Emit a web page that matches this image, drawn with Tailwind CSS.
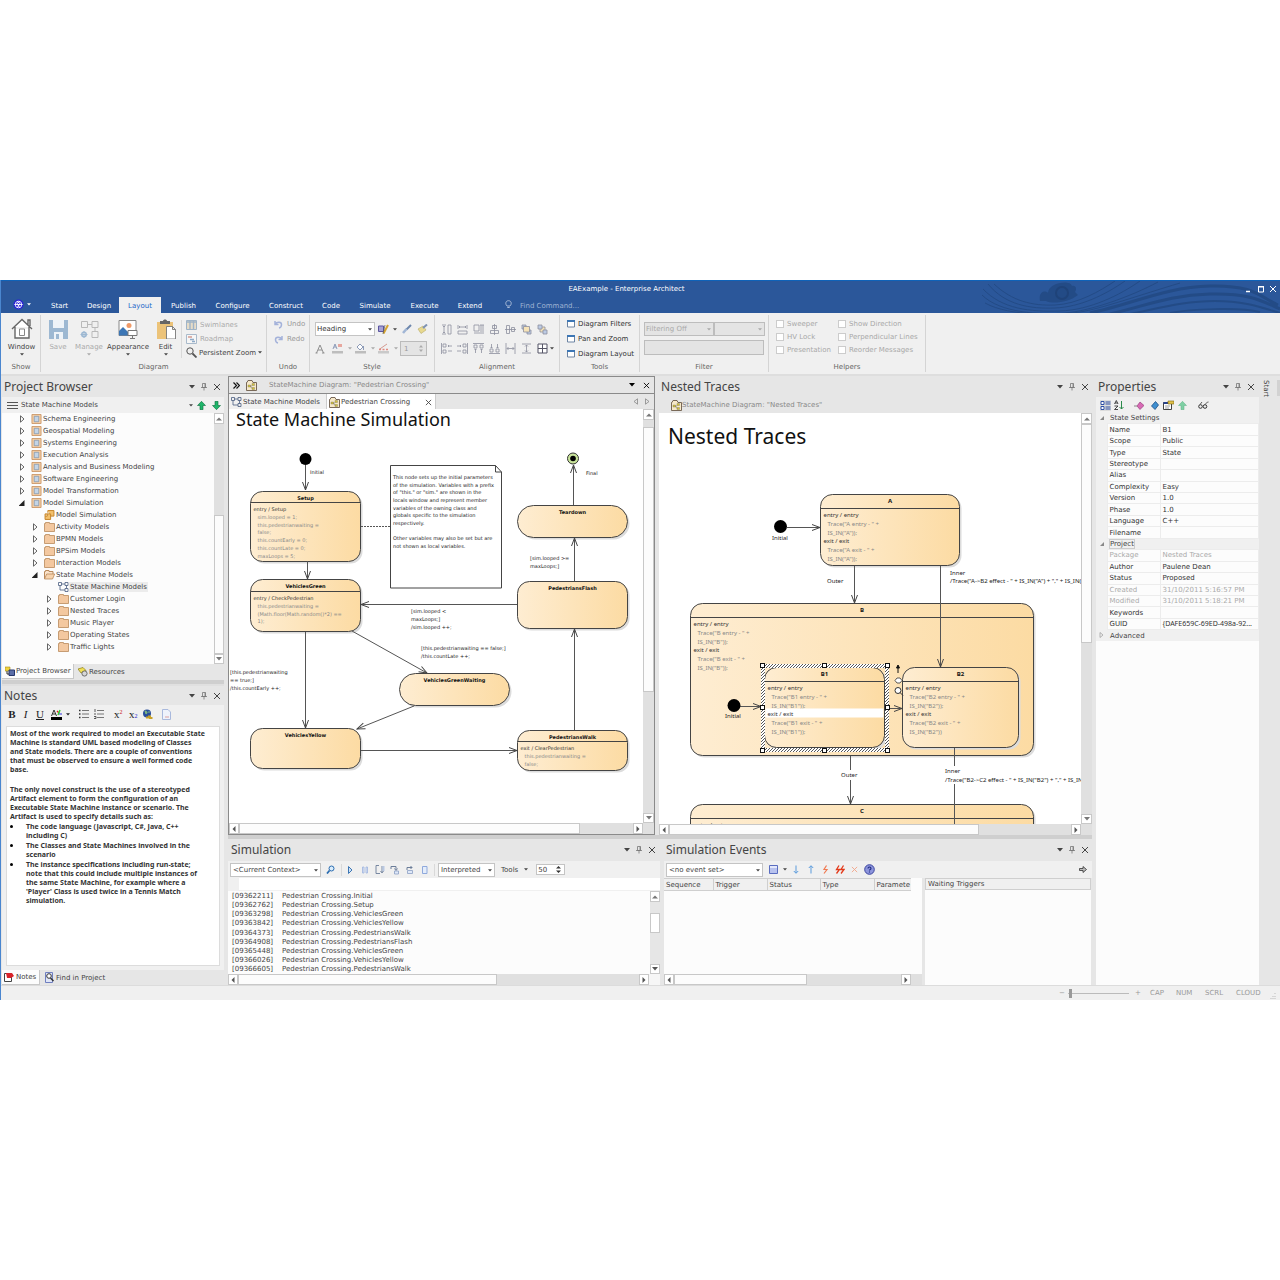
<!DOCTYPE html>
<html lang="en">
  <head>
    <meta charset="UTF-8" />
    <meta name="viewport" content="width=device-width, initial-scale=1.0" />
    <title>EAExample - Enterprise Architect</title>
    <script src="https://cdn.jsdelivr.net/npm/@tailwindcss/browser@4"></script>
  </head>
  <body class="bg-white min-h-screen flex items-center font-['DejaVu_Sans',sans-serif] text-[7px] leading-[10px] text-[#444]">
    <!-- Shared icons -->
    <svg class="hidden">
      <symbol id="down" viewBox="0 0 6 4"><path d="M0 0h6L3 3.5z" fill="currentColor" /></symbol>
      <symbol id="pin" viewBox="0 0 8 8"><path d="M2.5 .5h3v4h-3zM1 4.5h6M4 4.5v3M5 .5v4" fill="none" stroke="#777" stroke-width=".8" /></symbol>
      <symbol id="close" viewBox="0 0 8 8"><path d="M1 1l6 6M7 1L1 7" fill="none" stroke="currentColor" /></symbol>
      <symbol id="model" viewBox="0 0 11 11"><path d="M.5 .5h10v10H.5z" fill="#f6cfa6" stroke="#c99667" /><path d="M3 2.5h5v6H3z" fill="#c3d4e6" stroke="#7f93ab" stroke-width=".8" /></symbol>
      <symbol id="folder" viewBox="0 0 11 10"><path d="M.5 9.5V1.5h1v-1h4v1h5v8z" fill="#f3c8a0" stroke="#b98a5c" stroke-width=".8" /></symbol>
      <symbol id="open" viewBox="0 0 11 10"><path d="M.5 9V1.5h1v-1h3.500v1h4v2.500" fill="#fbe3cb" stroke="#b98a5c" /><path d="M.5 9l2.200-5h8L8.500 9z" fill="#f7d3ad" stroke="#b98a5c" stroke-width=".8" /></symbol>
      <symbol id="sim" viewBox="0 0 9 9"><path d="M3 .5h5.500v5H5M3 .5v2M.5 3.500h5v5h-5zM.5 5.500h2v-2" fill="#f2c06d" stroke="#c8872d" stroke-width=".9" /></symbol>
      <symbol id="diagram" viewBox="0 0 11 10"><path d="M.5 .5h3v3h-3zM7 .5h3v3H7zM7 6.500h3v3H7zM3.500 2H7M2 3.500V8h5M8.500 3.500v3" fill="none" stroke="#4a5d80" stroke-width=".8" /></symbol>
      <symbol id="machine" viewBox="0 0 11 11"><path d="M1 2.500l1-2h4l1 2h3.500v8H.5v-8z" fill="#f7e9c9" stroke="#6b5a4a" stroke-width=".9" /><path d="M2 5h2.500v2H2zM6 3.500h2.500v2H6zM6 7.500h2.500v2H6z" fill="#d8c32e" stroke="#777" stroke-width=".4" /><path d="M4.500 6H6M4.500 6.500L6 8.500" stroke="#555" stroke-width=".5" /></symbol>
      <symbol id="win" viewBox="0 0 8 8"><path d="M.5 .5h7v6.500h-7z" fill="#fff" stroke="#6c84a3" /><path d="M0 0h8v2H0z" fill="#3c76b5" /></symbol>
      <symbol id="tri-up" viewBox="0 0 6 4"><path d="M0 3.500h6L3 .5z" fill="#777" /></symbol>
      <symbol id="tri-left" viewBox="0 0 4 6"><path d="M3.500 0v6L.5 3z" fill="#555" /></symbol>
      <symbol id="tri-right" viewBox="0 0 4 6"><path d="M.5 0v6L3.500 3z" fill="#555" /></symbol>
      <symbol id="arrow-green-up" viewBox="0 0 9 9"><path d="M4.500 .3L8.500 4.500H6V8.700H3V4.500H.5z" fill="#1fb56a" stroke="#0a6b3b" stroke-width=".6" /></symbol>
    </svg>

    <div class="w-full bg-[#e6e6e6] border-l border-[#4a86cf]">
      <!-- Title bar and ribbon tabs -->
      <header class="relative bg-[#2b579a] border-t border-[#0f62b8] text-white overflow-hidden">
        <svg class="absolute right-0 top-0 w-[300px] h-8" viewBox="0 0 300 32" fill="none" stroke="#234b86">
          <path d="M8 3C25 24 50 28 75 27S125 14 145 0M14 3C32 20 52 25 75 24S120 10 135 0M3 8C22 28 50 31 80 30S140 14 160 0M2 14C20 32 60 34 85 32S150 16 178 1M5 22C30 36 80 34 100 31S160 14 200 2" />
          <path d="M110 32C150 24 185 6 230 5S280 16 298 24M130 33C165 25 190 14 230 13S282 20 300 28" stroke-width="3" />
          <path d="M150 33C180 27 205 20 235 20S280 26 300 32M190 32C210 28 260 26 280 31" stroke-width="2" />
          <path d="M60 20C58 10 66 9 68 12C68 2 90 -2 92 5C96 4 97 8 95 11L98 14C88 22 72 23 66 20z" fill="#234b86" stroke="none" />
          <circle cx="82" cy="12" r="6" stroke="#1f4379" stroke-width="2" />
        </svg>
        <div class="relative flex items-center h-4 pr-7">
          <span class="flex-1 text-center">EAExample - Enterprise Architect</span>
          <button class="absolute right-[28px] top-1 w-2 h-2" aria-label="Minimize"><svg class="w-2 h-2" viewBox="0 0 8 8"><path d="M2 6.500h4" stroke="#fff" stroke-width="1.500" /></svg></button>
          <button class="absolute right-[15px] top-1 w-2 h-2" aria-label="Maximize"><svg class="w-2 h-2" viewBox="0 0 8 8"><path d="M1.500 2h5v5h-5z" fill="none" stroke="#fff" /><path d="M1 1.500h6" stroke="#fff" /></svg></button>
          <button class="absolute right-[3px] top-1 w-2 h-2" aria-label="Close"><svg class="w-2 h-2"><use href="#close" /></svg></button>
        </div>
        <nav class="relative flex items-end h-4">
          <button class="flex items-center gap-[3px] w-[39px] h-3 pl-3 mb-[3px]" aria-label="Application menu">
            <svg class="w-[11px] h-[11px]" viewBox="0 0 11 11"><circle cx="5.500" cy="5.500" r="5" fill="#2a22d8" /><path d="M4 2l3 2.500L4 9M7 2L4 4.500L7 9M1.500 5.500h8" fill="none" stroke="#fff" stroke-width=".9" /><circle cx="5.500" cy="5.500" r="3.300" fill="none" stroke="#fff" stroke-width=".8" /></svg>
            <svg class="w-1 h-[3px]"><use href="#down" /></svg>
          </button>
          <a href="#" class="w-[39px] h-4 leading-4 pt-px text-center">Start</a>
          <a href="#" class="w-[40px] h-4 leading-4 pt-px text-center">Design</a>
          <a href="#" class="w-[42px] h-4 leading-4 pt-px text-center bg-[#f0f0f0] text-[#1d66c9]">Layout</a>
          <a href="#" class="w-[45px] h-4 leading-4 pt-px text-center">Publish</a>
          <a href="#" class="w-[53px] h-4 leading-4 pt-px text-center">Configure</a>
          <a href="#" class="w-[54px] h-4 leading-4 pt-px text-center">Construct</a>
          <a href="#" class="w-[36px] h-4 leading-4 pt-px text-center">Code</a>
          <a href="#" class="w-[52px] h-4 leading-4 pt-px text-center">Simulate</a>
          <a href="#" class="w-[47px] h-4 leading-4 pt-px text-center">Execute</a>
          <a href="#" class="w-[44px] h-4 leading-4 pt-px text-center">Extend</a>
          <svg class="ml-[13px] mb-1 w-[7px] h-[9px]" viewBox="0 0 7 9"><path d="M2 6C0 4 .5 .7 3.500 .7S7 4 5 6zM2.300 7.500h2.400" fill="none" stroke="#a9bbd8" /></svg>
          <input class="ml-2 h-4 pt-px w-[90px] placeholder:text-[#9fb3d3]" placeholder="Find Command..." aria-label="Find Command" />
        </nav>
      </header>

      <!-- Ribbon -->
      <section class="flex h-[63px] bg-[#f0f0f0] border-b-2 border-[#dedede] pt-[2px] pb-[2px] pl-px">
        <div class="w-[39px] flex flex-col justify-between border-r border-[#d4d4d4]">
          <button class="flex flex-col items-center pt-[3px] pl-px">
            <svg class="w-[22px] h-[21px]" viewBox="0 0 22 21"><path d="M1 11L11 1.500L21 11M17 7V2h2v6M4 9v11h14V9" fill="#fff" stroke="#666" stroke-width="1.400" /><path d="M8.500 11h5v6.500h-5z" fill="none" stroke="#888" /></svg>
            <span class="mt-[3px]">Window</span><svg class="mt-px w-1 h-[3px]"><use href="#down" /></svg>
          </button>
          <span class="text-center text-[#666]">Show</span>
        </div>
        <div class="w-[226px] flex flex-col justify-between border-r border-[#d4d4d4]">
          <div class="flex">
            <button class="w-[34px] flex flex-col items-center pt-[5px] text-[#aaa]">
              <svg class="w-[19px] h-[19px]" viewBox="0 0 19 19"><path d="M0 0h19v19H0z" fill="#9db8d2" /><path d="M4 0h11v8H4zM5 12h9v7H5z" fill="#eef3f8" /><path d="M7 14h3v5H7z" fill="#9db8d2" /></svg>
              <span class="mt-[3px]">Save</span>
            </button>
            <button class="w-[28px] flex flex-col items-center pt-[5px] text-[#aaa]">
              <svg class="w-[19px] h-[19px]" viewBox="0 0 19 19"><path d="M1.500 1.500h6v6h-6zM12 1.500h6v6h-6zM12 11.500h6v6h-6zM7.500 4.500H12M15 7.500v4" fill="none" stroke="#b9b9b9" /><circle cx="4" cy="14.500" r="2.200" fill="none" stroke="#9db8d2" stroke-width="1.600" /><path d="M4 11v7M.5 14.500h7" stroke="#9db8d2" /></svg>
              <span class="mt-[3px]">Manage</span><svg class="mt-px w-1 h-[3px]"><use href="#down" /></svg>
            </button>
            <button class="w-[50px] flex flex-col items-center pt-[5px]">
              <svg class="w-[20px] h-[19px]" viewBox="0 0 20 19"><path d="M1 .5h17v15H1z" fill="#fff" stroke="#888" /><circle cx="11" cy="5.500" r="2.500" fill="#f09a68" /><path d="M1 15.500V11l4-4l5 5v3.500z" fill="#3c76b5" /><path d="M10 10.500h9v5h-9zM14.500 15.500v3M12 18.500h5" fill="#fff" stroke="#777" /></svg>
              <span class="mt-[3px]">Appearance</span><svg class="mt-px w-1 h-[3px]"><use href="#down" /></svg>
            </button>
            <button class="w-[28px] flex flex-col items-center pt-[4px] pr-[3px]">
              <svg class="w-[20px] h-[20px]" viewBox="0 0 20 20"><path d="M1 3h16v17H1z" fill="#ecc379" /><path d="M4 5V2h3c0-2 4-2 4 0h3v3z" fill="#666" /><path d="M10.500 7.500h6l3 3v9.500h-9zM16.500 7.500v3h3" fill="#fff" stroke="#777" stroke-width=".9" /></svg>
              <span class="mt-[3px]">Edit</span><svg class="mt-px w-1 h-[3px]"><use href="#down" /></svg>
            </button>
            <div class="mt-[5px] h-[38px] border-l border-[#d9d9d9] pl-1 flex flex-col justify-between">
              <button class="flex items-center gap-[3px] text-[#aaa]"><svg class="w-[11px] h-[10px]" viewBox="0 0 11 10"><path d="M.5 .5h10v9H.5z" fill="#e6dcc8" stroke="#9fb4c8" /><path d="M4 0v10M7.500 0v10M0 2h11" stroke="#9fb4c8" stroke-width="1.400" /></svg>Swimlanes</button>
              <button class="flex items-center gap-[3px] text-[#aaa]"><svg class="w-[11px] h-[10px]" viewBox="0 0 11 10"><path d="M.5 .5h10v9H.5z" fill="#f6f6f6" stroke="#a9bacb" /><path d="M2 3h4" stroke="#d49a90" stroke-width="1.500" /><path d="M4 5.500h4M6 7.500h3" stroke="#8eaac8" stroke-width="1.300" /></svg>Roadmap</button>
              <button class="flex items-center gap-[2px]"><svg class="w-[11px] h-[11px]" viewBox="0 0 11 11"><circle cx="4" cy="4" r="3.200" fill="none" stroke="#555" /><path d="M6.500 6.500l4 4" stroke="#555" stroke-width="1.800" /></svg>Persistent Zoom<svg class="w-1 h-[3px]"><use href="#down" /></svg></button>
            </div>
          </div>
          <span class="text-center text-[#666]">Diagram</span>
        </div>
        <div class="w-[43px] flex flex-col justify-between border-r border-[#d4d4d4] text-[#999]">
          <div class="flex flex-col gap-[5px] pt-1 pl-[7px]">
            <button class="flex items-center gap-1"><svg class="w-[9px] h-[9px]" viewBox="0 0 9 9"><path d="M1 1v3.500h3.500M1 4C3 1.500 7.500 1.500 7.500 4.500S5 8 5 8" fill="none" stroke="#a4b2da" stroke-width="1.500" /></svg>Undo</button>
            <button class="flex items-center gap-1"><svg class="w-[9px] h-[9px]" viewBox="0 0 9 9"><path d="M8 1v3.500H4.500M8 4C6 1.500 1.500 1.500 1.500 4.500S4 8 4 8" fill="none" stroke="#a4b2da" stroke-width="1.500" /></svg>Redo</button>
          </div>
          <span class="text-center text-[#666]">Undo</span>
        </div>
        <div class="w-[125px] flex flex-col justify-between border-r border-[#d4d4d4]">
          <div class="pt-[7px] pl-[5px]">
            <div class="flex items-center">
              <span class="relative"><select aria-label="Style" class="appearance-none block w-[60px] h-[14px] bg-white border border-[#c4c4c4] pl-px text-[#333]"><option>Heading</option></select><svg class="absolute right-[3px] top-[6px] w-1 h-[3px] pointer-events-none"><use href="#down" /></svg></span>
              <svg class="ml-[3px] w-[11px] h-[11px]" viewBox="0 0 11 11"><path d="M.5 2h5v5.500h-5z" fill="#a6a2d4" stroke="#5a55a0" /><path d="M10 1L5.500 9.500" stroke="#d6a531" stroke-width="2" /><path d="M7 1L5 10" stroke="#555" stroke-width=".7" /></svg>
              <svg class="ml-1 w-1 h-[3px]"><use href="#down" /></svg>
              <svg class="ml-[5px] w-[10px] h-[10px]" viewBox="0 0 10 10"><path d="M9 1L4.500 5.500" stroke="#6d87ad" stroke-width="2" /><path d="M4.500 5L1 9" stroke="#a2b7d6" stroke-width="2.500" /></svg>
              <svg class="ml-[5px] w-[11px] h-[10px]" viewBox="0 0 11 10"><path d="M1 5l5-3l3 4l-5 3.500z" fill="#e8d98f" stroke="#b9ab6a" stroke-width=".6" /><path d="M6 4L10 .5" stroke="#7f93b4" stroke-width="2" /></svg>
            </div>
            <div class="flex items-center mt-[5px]">
              <svg class="w-[10px] h-[10px]" viewBox="0 0 10 10"><path d="M1.500 9L5 1l3.500 8M3 6h4M.5 9h2M7 9h2.500" fill="none" stroke="#8f8f8f" /></svg>
              <svg class="ml-[7px] w-[11px] h-[11px]" viewBox="0 0 11 11"><path d="M1 6L3 1l2 5M2 4h2" fill="none" stroke="#8d9bb8" /><path d="M6 1h4v3H6z" fill="#e7a79e" /><path d="M0 8h11v2.500H0z" fill="#bdbdbd" /></svg>
              <svg class="ml-[5px] w-1 h-[3px] text-[#aaa]"><use href="#down" /></svg>
              <svg class="ml-[3px] w-[11px] h-[11px]" viewBox="0 0 11 11"><path d="M2 4l3-3l3 3l-3 3zM8.500 3v4" fill="#fff" stroke="#8d9bb8" /><path d="M0 8h11v2.500H0z" fill="#bdbdbd" /></svg>
              <svg class="ml-[5px] w-1 h-[3px] text-[#aaa]"><use href="#down" /></svg>
              <svg class="ml-[3px] w-[11px] h-[11px]" viewBox="0 0 11 11"><path d="M1 6.500L9 1" stroke="#d49a90" /><path d="M1 6.500h2M4.500 6.500h2M8 6.500h2" stroke="#e08a80" stroke-width="1.500" /><path d="M0 8h11v2.500H0z" fill="#c9c9c9" /></svg>
              <svg class="ml-[5px] w-1 h-[3px] text-[#aaa]"><use href="#down" /></svg>
              <span class="relative ml-[2px]"><input aria-label="Line width" value="1" class="block w-[27px] h-[15px] bg-[#e4e4e4] border border-[#bbb] pl-[3px] text-[#999]" /><svg class="absolute right-1 top-1 w-1 h-[7px]" viewBox="0 0 4 7"><path d="M0 2.500h4L2 0zM0 4.500h4L2 7z" fill="#aaa" /></svg></span>
            </div>
          </div>
          <span class="text-center text-[#666]">Style</span>
        </div>
        <div class="w-[125px] flex flex-col justify-between border-r border-[#d4d4d4]">
          <div class="flex flex-col gap-[8px] pt-[9px] pl-[6px]">
            <div class="flex gap-[5px]" id="align-top"></div>
            <div class="flex gap-[5px] items-center" id="align-bottom"></div>
          </div>
          <span class="text-center text-[#666]">Alignment</span>
        </div>
        <div class="w-[80px] flex flex-col justify-between border-r border-[#d4d4d4]">
          <div class="flex flex-col gap-[5px] pt-1 pl-[7px] text-[#333]">
            <button class="flex items-center gap-[3px]"><svg class="w-2 h-2"><use href="#win" /></svg>Diagram Filters</button>
            <button class="flex items-center gap-[3px]"><svg class="w-2 h-2"><use href="#win" /></svg>Pan and Zoom</button>
            <button class="flex items-center gap-[3px]"><svg class="w-2 h-2"><use href="#win" /></svg>Diagram Layout</button>
          </div>
          <span class="text-center text-[#666]">Tools</span>
        </div>
        <div class="w-[129px] flex flex-col justify-between border-r border-[#d4d4d4]">
          <div class="pt-[7px] pl-1">
            <div class="flex">
              <span class="relative"><select disabled aria-label="Filter mode" class="appearance-none block w-[70px] h-[14px] bg-[#e4e4e4] border border-[#bdbdbd] pl-px text-[#aaa]"><option>Filtering Off</option></select><svg class="absolute right-[3px] top-[6px] w-1 h-[3px] text-[#aaa]"><use href="#down" /></svg></span>
              <span class="relative"><select disabled aria-label="Filter value" class="appearance-none block w-[51px] h-[14px] bg-[#e4e4e4] border border-[#bdbdbd]"><option></option></select><svg class="absolute right-[3px] top-[6px] w-1 h-[3px] text-[#aaa]"><use href="#down" /></svg></span>
            </div>
            <input disabled aria-label="Filter text" class="mt-1 block w-[120px] h-[15px] bg-[#e4e4e4] border border-[#bdbdbd]" />
          </div>
          <span class="text-center text-[#666]">Filter</span>
        </div>
        <div class="w-[157px] flex flex-col justify-between border-r border-[#d4d4d4] text-[#a8a8a8]">
          <div class="grid grid-cols-[62px_auto] gap-y-[3px] pt-1 pl-[7px]" id="helpers"></div>
          <span class="text-center text-[#666]">Helpers</span>
        </div>
      </section>

      <main class="flex">
        <!-- Left column -->
        <aside class="w-[227px] shrink-0 flex flex-col pl-px pr-[4px]">
          <div class="flex items-center h-[21px] pl-[2px] pr-[3px]">
            <h2 class="flex-1 font-['Noto_Sans',sans-serif] text-[12px] leading-4">Project Browser</h2>
            <span class="flex items-center gap-[5px]"><svg class="w-[6px] h-1"><use href="#down" /></svg><svg class="w-2 h-2"><use href="#pin" /></svg><svg class="w-2 h-2"><use href="#close" /></svg></span>
          </div>
          <div class="flex items-center h-4 bg-[#f0f0f0] pl-[5px] pr-[3px]">
            <svg class="w-[11px] h-[9px]" viewBox="0 0 11 9"><path d="M0 1.500h11M0 4.500h11M0 7.500h11" stroke="#555" /></svg>
            <span class="flex-1 pl-[3px]">State Machine Models</span>
            <svg class="w-1 h-[3px] mr-1"><use href="#down" /></svg>
            <svg class="w-[9px] h-[9px] mr-[6px]"><use href="#arrow-green-up" /></svg>
            <svg class="w-[9px] h-[9px] rotate-180"><use href="#arrow-green-up" /></svg>
          </div>
          <div class="flex h-[251px] bg-[#fcfcfc]">
            <ul class="flex-1" id="tree"></ul>
            <div class="w-[10px] flex flex-col bg-[#e0e0e0]">
              <button class="h-[11px] grid place-items-center bg-white border border-[#c8c8c8]" aria-label="Scroll up"><svg class="w-[6px] h-1"><use href="#tri-up" /></svg></button>
              <div class="flex-1"></div>
              <div class="h-[139px] bg-[#fcfcfc] border border-[#c8c8c8]"></div>
              <button class="h-[10px] grid place-items-center bg-white border border-[#c8c8c8] text-[#777]" aria-label="Scroll down"><svg class="w-[6px] h-1"><use href="#down" /></svg></button>
            </div>
          </div>
          <div class="flex h-[15px]">
            <button class="flex items-center gap-px w-[72px] pl-[3px] bg-[#fcfcfc] border-r border-b border-[#c8c8c8]"><svg class="w-[10px] h-[10px]" viewBox="0 0 10 10"><path d="M0 1h5v4H0z" fill="#f0d33e" stroke="#a58c1a" stroke-width=".6" /><path d="M4 4h5.500v5.500H4z" fill="#5a6ea8" stroke="#26366b" /><path d="M2 5v3h2" stroke="#333" fill="none" /></svg>Project Browser</button>
            <button class="flex items-center gap-px pl-1"><svg class="w-[10px] h-[10px]" viewBox="0 0 10 10"><path d="M0 2l5-1.500l3 3L3 6z" fill="#f1e056" stroke="#8a7a16" stroke-width=".7" /><circle cx="6.500" cy="6.500" r="2.600" fill="#d7d7d7" stroke="#555" stroke-width=".8" /></svg>Resources</button>
          </div>
          <div class="h-[6px] mt-px bg-[#cfcfcf] border-b-2 border-[#e0e0e0]"></div>

          <div class="flex items-center h-[19px] pl-[2px] pr-[3px]">
            <h2 class="flex-1 font-['Noto_Sans',sans-serif] text-[12px] leading-4">Notes</h2>
            <span class="flex items-center gap-[5px]"><svg class="w-[6px] h-1"><use href="#down" /></svg><svg class="w-2 h-2"><use href="#pin" /></svg><svg class="w-2 h-2"><use href="#close" /></svg></span>
          </div>
          <div class="bg-[#f0f0f0] px-1 pb-1">
            <div class="flex items-center h-[18px] text-[11px] font-['Liberation_Serif',serif] text-[#222]">
              <button class="w-[12px] text-center font-bold">B</button>
              <button class="w-[15px] text-center italic">I</button>
              <button class="w-[14px] text-center underline">U</button>
              <svg class="ml-1 w-[11px] h-[11px]" viewBox="0 0 11 11"><path d="M.5 7L3 1l2.500 6M1.500 5h3" fill="none" stroke="#333" /><path d="M6 2l2 2" stroke="#d22" stroke-width="1.500" /><path d="M9 1L7 6" stroke="#3c3" stroke-width="1.500" /><path d="M8 5h3" stroke="#33d" /><path d="M0 8h11v3H0z" fill="#000" /></svg>
              <svg class="ml-1 w-1 h-[3px]"><use href="#down" /></svg>
              <svg class="ml-[9px] w-[10px] h-[10px]" viewBox="0 0 10 10"><path d="M3 1.500h7M3 5h7M3 8.500h7" stroke="#777" /><path d="M0 1.500h1.500M0 5h1.500M0 8.500h1.500" stroke="#333" stroke-width="1.500" /></svg>
              <svg class="ml-[5px] w-[10px] h-[10px]" viewBox="0 0 10 10"><path d="M3 1.500h7M3 5h7M3 8.500h7" stroke="#777" /><path d="M1 0v3M0 5h2M0 7.500h2v2H0" stroke="#333" stroke-width=".8" fill="none" /></svg>
              <button class="ml-[10px] w-[15px] flex items-start">x<span class="text-[6px] leading-[6px] text-[#c22]">2</span></button>
              <button class="w-[13px] flex items-end">x<span class="text-[6px] leading-[6px] text-[#22c]">2</span></button>
              <svg class="w-[11px] h-[11px]" viewBox="0 0 11 11"><circle cx="5" cy="4.500" r="4" fill="#2a4f9b" /><path d="M3 2c2 0 3 2 1 3zM6 3h2" fill="#7fb87f" stroke="#7fb87f" /><path d="M4 8.500h3M7 9h3.500M6 7.500h3" stroke="#c9a227" stroke-width="1.800" /></svg>
              <svg class="ml-[9px] w-[9px] h-[11px]" viewBox="0 0 9 11"><path d="M.5 .5h5.500l2.500 2.500v7.500h-8z" fill="#eef2fb" stroke="#a9b9dd" /><path d="M3 8h4" stroke="#dba0a0" /></svg>
            </div>
            <div class="mt-[3px] h-[240px] bg-white border border-[#dcdcdc] px-[3px] pt-[2px] font-['Noto_Sans',sans-serif] font-bold leading-[9px] text-[#333]">
              <p class="whitespace-nowrap">Most of the work required to model an Executable State<br />Machine is standard UML based modeling of Classes<br />and State models. There are a couple of conventions<br />that must be observed to ensure a well formed code<br />base.</p>
              <p class="mt-[11px] whitespace-nowrap">The only novel construct is the use of a stereotyped<br />Artifact element to form the configuration of an<br />Executable State Machine instance or scenario. The<br />Artifact is used to specify details such as:</p>
              <ul class="mt-px flex flex-col gap-px pl-4 whitespace-nowrap">
                <li class="relative before:absolute before:-left-4 before:top-[3px] before:w-[3px] before:h-[3px] before:rounded-full before:bg-black">The code language (Javascript, C#, Java, C++<br />including C)</li>
                <li class="relative before:absolute before:-left-4 before:top-[3px] before:w-[3px] before:h-[3px] before:rounded-full before:bg-black">The Classes and State Machines involved in the<br />scenario</li>
                <li class="relative before:absolute before:-left-4 before:top-[3px] before:w-[3px] before:h-[3px] before:rounded-full before:bg-black">The instance specifications including run-state;<br />note that this could include multiple instances of<br />the same State Machine, for example where a<br />'Player' Class is used twice in a Tennis Match<br />simulation.</li>
              </ul>
            </div>
          </div>
          <div class="flex h-[15px]">
            <button class="flex items-center gap-[2px] w-[38px] pl-[2px] bg-[#fcfcfc] border-r border-b border-[#c8c8c8]"><svg class="w-[10px] h-[10px]" viewBox="0 0 10 10"><path d="M.5 1.500h7v8h-7z" fill="#fff" stroke="#444" /><path d="M2 1h6l2 3l-3 2H3z" fill="#d8242a" /></svg>Notes</button>
            <button class="flex items-center gap-[2px] pl-[5px]"><svg class="w-[9px] h-[11px]" viewBox="0 0 9 11"><path d="M.5 .5h7v10h-7z" fill="#dfe5f7" stroke="#6f7fc0" /><circle cx="4" cy="4" r="2.300" fill="#fff" stroke="#333" /><path d="M5.500 6l3 3" stroke="#333" stroke-width="1.500" /></svg>Find in Project</button>
          </div>
        </aside>

        <!-- Centre column -->
        <div class="flex-1 min-w-0 flex flex-col">
          <div class="flex">
            <section class="flex-[428] min-w-0 border border-[#8a8a8a]">
              <div class="flex items-center h-[17px] border-b border-[#8a8a8a] pl-1 pr-1">
                <svg class="w-[7px] h-[7px]" viewBox="0 0 7 7"><path d="M.5 .5l3 3l-3 3M3.500 .5l3 3l-3 3" fill="none" stroke="#111" stroke-width="1.200" /></svg>
                <svg class="ml-[6px] w-[11px] h-[11px]"><use href="#machine" /></svg>
                <span class="flex-1 pl-3 text-[#888]">StateMachine Diagram: "Pedestrian Crossing"</span>
                <svg class="w-[6px] h-1 mr-2 text-black"><use href="#down" /></svg>
                <svg class="w-[7px] h-[7px] text-black"><use href="#close" /></svg>
              </div>
              <div class="flex items-stretch h-[15px]">
                <button class="flex items-center gap-px w-[97px] pl-[2px] bg-[#f0f0f0]"><svg class="w-[11px] h-[10px]"><use href="#diagram" /></svg>State Machine Models</button>
                <button class="flex items-center gap-px w-[110px] pl-[2px] bg-white border-l border-r border-[#ccc] pt-px"><svg class="w-[11px] h-[11px]"><use href="#machine" /></svg><span class="flex-1 text-left">Pedestrian Crossing</span><svg class="w-[7px] h-[7px] mr-[3px]"><use href="#close" /></svg></button>
                <span class="flex-1 flex items-center justify-end gap-[7px] pr-1"><svg class="w-[5px] h-[7px]" viewBox="0 0 5 7"><path d="M4.500 .8v5.400L1 3.500z" fill="none" stroke="#888" stroke-width=".8" /></svg><svg class="w-[5px] h-[7px]" viewBox="0 0 5 7"><path d="M.5 .8v5.400L4 3.500z" fill="none" stroke="#888" stroke-width=".8" /></svg></span>
              </div>
              <div class="flex h-[414px] bg-white">
                <svg class="flex-1 h-[414px] overflow-hidden" id="pedestrian"></svg>
                <div class="w-[11px] flex flex-col bg-[#e0e0e0]">
                  <button class="h-[11px] grid place-items-center bg-white border border-[#c8c8c8]" aria-label="Scroll up"><svg class="w-[6px] h-1"><use href="#tri-up" /></svg></button>
                  <div class="h-[7px]"></div>
                  <div class="h-[265px] bg-[#fcfcfc] border border-[#c8c8c8]"></div>
                  <div class="flex-1"></div>
                  <button class="h-[10px] grid place-items-center bg-white border border-[#c8c8c8] text-[#777]" aria-label="Scroll down"><svg class="w-[6px] h-1"><use href="#down" /></svg></button>
                </div>
              </div>
              <div class="flex h-[11px] bg-[#e0e0e0] pr-[11px]">
                <button class="w-[10px] grid place-items-center bg-white border border-[#c8c8c8]" aria-label="Scroll left"><svg class="w-1 h-[6px]"><use href="#tri-left" /></svg></button>
                <div class="w-[341px] bg-[#fcfcfc] border border-[#c8c8c8]"></div>
                <div class="flex-1"></div>
                <button class="w-[10px] grid place-items-center bg-white border border-[#c8c8c8]" aria-label="Scroll right"><svg class="w-1 h-[6px]"><use href="#tri-right" /></svg></button>
              </div>
            </section>

            <section class="flex-[436] min-w-0 pl-1">
              <div class="flex items-center h-[21px] pl-[2px] pr-[3px]">
                <h2 class="flex-1 font-['Noto_Sans',sans-serif] text-[12px] leading-4">Nested Traces</h2>
                <span class="flex items-center gap-[5px]"><svg class="w-[6px] h-1"><use href="#down" /></svg><svg class="w-2 h-2"><use href="#pin" /></svg><svg class="w-2 h-2"><use href="#close" /></svg></span>
              </div>
              <div class="flex items-center h-4 pl-3 text-[#888]"><svg class="w-[11px] h-[11px]"><use href="#machine" /></svg>StateMachine Diagram: "Nested Traces"</div>
              <div class="flex h-[411px] bg-white">
                <svg class="flex-1 h-[411px] overflow-hidden" id="nested"></svg>
                <div class="w-[11px] flex flex-col bg-[#e0e0e0]">
                  <button class="h-[11px] grid place-items-center bg-white border border-[#c8c8c8]" aria-label="Scroll up"><svg class="w-[6px] h-1"><use href="#tri-up" /></svg></button>
                  <div class="h-[219px] bg-[#fcfcfc] border border-[#c8c8c8]"></div>
                  <div class="flex-1"></div>
                  <button class="h-[10px] grid place-items-center bg-white border border-[#c8c8c8] text-[#777]" aria-label="Scroll down"><svg class="w-[6px] h-1"><use href="#down" /></svg></button>
                </div>
              </div>
              <div class="flex h-[11px] bg-[#e0e0e0] pr-[11px]">
                <button class="w-[10px] grid place-items-center bg-white border border-[#c8c8c8]" aria-label="Scroll left"><svg class="w-1 h-[6px]"><use href="#tri-left" /></svg></button>
                <div class="w-[310px] bg-[#fcfcfc] border border-[#c8c8c8]"></div>
                <div class="flex-1"></div>
                <button class="w-[10px] grid place-items-center bg-white border border-[#c8c8c8]" aria-label="Scroll right"><svg class="w-1 h-[6px]"><use href="#tri-right" /></svg></button>
              </div>
            </section>
          </div>
          <div class="h-[4px] bg-[#cfcfcf]"></div>

          <div class="flex gap-1">
            <!-- Simulation -->
            <section class="flex-[432] min-w-0">
              <div class="flex items-center h-[22px] pl-[3px] pr-1">
                <h2 class="flex-1 font-['Noto_Sans',sans-serif] text-[12px] leading-4">Simulation</h2>
                <span class="flex items-center gap-[5px]"><svg class="w-[6px] h-1"><use href="#down" /></svg><svg class="w-2 h-2"><use href="#pin" /></svg><svg class="w-2 h-2"><use href="#close" /></svg></span>
              </div>
              <div class="flex items-center h-[17px] bg-[#f0f0f0] pl-[2px]">
                <span class="relative"><select aria-label="Context" class="appearance-none block w-[91px] h-[14px] bg-white border border-[#c4c4c4] pl-[2px]"><option>&lt;Current Context&gt;</option></select><svg class="absolute right-[3px] top-[6px] w-1 h-[3px] pointer-events-none"><use href="#down" /></svg></span>
                <svg class="ml-[5px] w-[9px] h-[9px]" viewBox="0 0 9 9"><circle cx="5.500" cy="3.500" r="2.500" fill="#d9ecfb" stroke="#2b6cb0" /><path d="M3.500 5.500L1 8.500" stroke="#2b6cb0" stroke-width="1.800" /></svg>
                <span class="ml-[6px] mr-[3px] h-3 border-l border-[#d9d9d9]"></span>
                <svg class="w-[10px] h-[10px]" viewBox="0 0 10 10"><path d="M3.500 1.500v7L7 5z" fill="#cfe1f3" stroke="#3c76b5" /></svg>
                <svg class="ml-[5px] w-[10px] h-[10px]" viewBox="0 0 10 10"><path d="M2.500 2h1.500v6H2.500zM6 2h1.500v6H6z" fill="#dfe8f8" stroke="#9db3dd" stroke-width=".8" /></svg>
                <svg class="ml-[5px] w-[10px] h-[10px]" viewBox="0 0 10 10"><path d="M4 .5H1v8h4M7 1v6M5.500 6L7 8l1.500-2" fill="none" stroke="#6b7d99" stroke-width=".9" /><path d="M7.500 1h2v5h-2z" fill="#b9c8e2" /></svg>
                <svg class="ml-[5px] w-[10px] h-[10px]" viewBox="0 0 10 10"><path d="M1 4V1.500h5v3M4.500 3.500l1.500 2l1.500-2" fill="none" stroke="#6b7d99" /><path d="M4.500 6h4v3h-4z" fill="#dfe8f8" stroke="#8ba0c4" stroke-width=".8" /></svg>
                <svg class="ml-[5px] w-[10px] h-[10px]" viewBox="0 0 10 10"><path d="M2 5V2.500h5M5.500 1L7 2.500L5.500 4" fill="none" stroke="#6b7d99" /><path d="M2.500 5.500h5v3h-5z" fill="#dfe8f8" stroke="#8ba0c4" stroke-width=".8" /></svg>
                <svg class="ml-[5px] w-[10px] h-[10px]" viewBox="0 0 10 10"><path d="M2.500 1.500h4.500v7H2.500z" fill="#e4edfb" stroke="#8fa9dc" /></svg>
                <span class="ml-1 mr-[3px] h-3 border-l border-[#d9d9d9]"></span>
                <span class="relative"><select aria-label="Execution mode" class="appearance-none block w-[57px] h-[14px] bg-white border border-[#c4c4c4] pl-[2px]"><option>Interpreted</option></select><svg class="absolute right-[3px] top-[6px] w-1 h-[3px] pointer-events-none"><use href="#down" /></svg></span>
                <button class="ml-[6px] flex items-center gap-[6px]">Tools<svg class="w-1 h-[3px]"><use href="#down" /></svg></button>
                <span class="relative ml-2"><input aria-label="Speed" value="50" class="block w-[29px] h-[11px] bg-white border border-[#c4c4c4] pl-px" /><svg class="absolute right-1 top-[2px] w-[5px] h-[7px]" viewBox="0 0 5 7"><path d="M0 2.500h5L2.500 0zM0 4.500h5L2.500 7z" fill="#333" /></svg></span>
              </div>
              <div class="h-[13px] bg-[#f0f0f0] pl-[11px]"><div class="h-3 bg-white"></div></div>
              <div class="flex h-[83px] bg-[#fcfcfc]">
                <ol class="flex-1 h-[83px] pt-px flex flex-col justify-between overflow-hidden leading-[9px]" id="log"></ol>
                <div class="w-[10px] flex flex-col bg-[#e6e6e6]">
                  <button class="h-[11px] grid place-items-center bg-white border border-[#c8c8c8]" aria-label="Scroll up"><svg class="w-[6px] h-1"><use href="#tri-up" /></svg></button>
                  <div class="h-[11px]"></div>
                  <div class="h-[20px] bg-white border border-[#c8c8c8]"></div>
                  <div class="flex-1"></div>
                  <button class="h-[10px] grid place-items-center bg-white border border-[#c8c8c8] text-[#555]" aria-label="Scroll down"><svg class="w-[6px] h-1"><use href="#down" /></svg></button>
                </div>
              </div>
              <div class="flex h-[11px] bg-[#e0e0e0] border-r-[11px] border-[#f6f6f6]">
                <button class="w-[10px] grid place-items-center bg-white border border-[#c8c8c8]" aria-label="Scroll left"><svg class="w-1 h-[6px]"><use href="#tri-left" /></svg></button>
                <div class="w-[259px] bg-[#fcfcfc] border border-[#c8c8c8]"></div>
                <div class="flex-1"></div>
                <button class="w-[10px] grid place-items-center bg-white border border-[#c8c8c8]" aria-label="Scroll right"><svg class="w-1 h-[6px]"><use href="#tri-right" /></svg></button>
              </div>
            </section>

            <!-- Simulation events -->
            <section class="flex-[428] min-w-0">
              <div class="flex items-center h-[22px] pl-[2px] pr-[3px]">
                <h2 class="flex-1 font-['Noto_Sans',sans-serif] text-[12px] leading-4">Simulation Events</h2>
                <span class="flex items-center gap-[5px]"><svg class="w-[6px] h-1"><use href="#down" /></svg><svg class="w-2 h-2"><use href="#pin" /></svg><svg class="w-2 h-2"><use href="#close" /></svg></span>
              </div>
              <div class="flex items-center h-[17px] bg-[#f0f0f0] pl-[2px] pr-[5px]">
                <span class="relative"><select aria-label="Event set" class="appearance-none block w-[97px] h-[14px] bg-white border border-[#c4c4c4] pl-[2px]"><option>&lt;no event set&gt;</option></select><svg class="absolute right-[3px] top-[6px] w-1 h-[3px] pointer-events-none"><use href="#down" /></svg></span>
                <svg class="ml-[6px] w-[9px] h-[9px]" viewBox="0 0 9 9"><path d="M.5 .5h8v8h-8z" fill="#b8c2ee" stroke="#5a6dc0" /><path d="M1 1h7v2H1z" fill="#e4e8fb" /></svg>
                <svg class="ml-[5px] w-1 h-[3px]"><use href="#down" /></svg>
                <svg class="ml-[6px] w-[6px] h-[9px]" viewBox="0 0 6 9"><path d="M3 .5v7.500M.8 6L3 8.300L5.200 6" fill="none" stroke="#5b9bdc" /></svg>
                <svg class="ml-[9px] w-[6px] h-[9px]" viewBox="0 0 6 9"><path d="M3 8.500V1M.8 3L3 .7L5.200 3" fill="none" stroke="#5b9bdc" /></svg>
                <svg class="ml-2 w-[7px] h-[9px]" viewBox="0 0 7 9"><path d="M4.500 .5L2 4.500h3L2 8.500" fill="none" stroke="#f07a52" stroke-width="1.200" /></svg>
                <svg class="ml-[6px] w-[10px] h-[9px]" viewBox="0 0 10 9"><path d="M4 .5L1.500 4.500h3L1.500 8.500M8.500 .5L6 4.500h3L6 8.500" fill="none" stroke="#e33a1a" stroke-width="1.300" /></svg>
                <svg class="ml-[6px] w-[7px] h-[7px] text-[#f2a487]"><use href="#close" /></svg>
                <svg class="ml-[6px] w-[11px] h-[11px]" viewBox="0 0 11 11"><circle cx="5.500" cy="5.500" r="4.800" fill="#8d95dd" stroke="#3c469f" /><path d="M4 4.500c0-2 3-2 3 0c0 1-1.500 1-1.500 2M5.500 7.500v1" fill="none" stroke="#1f2a80" stroke-width="1.100" /></svg>
                <span class="flex-1"></span>
                <svg class="w-2 h-[7px]" viewBox="0 0 8 7"><path d="M.5 2.500H4V.5L7.500 3.500L4 6.500v-2H.5z" fill="#bbb" stroke="#333" stroke-width=".8" /></svg>
              </div>
              <div class="flex h-[107px] pr-px">
                <div class="w-[258px] flex flex-col bg-[#fcfcfc]">
                  <div class="flex-1 pr-[11px]">
                    <table class="w-full table-fixed border-collapse">
                      <thead><tr class="h-[12px] bg-[#f0f0f0] text-left">
                        <th class="w-[49px] font-normal pl-[2px] py-0 border border-l-0 border-[#cfcfcf]">Sequence</th>
                        <th class="w-[54px] font-normal pl-[2px] py-0 border border-[#cfcfcf]">Trigger</th>
                        <th class="w-[53px] font-normal pl-[2px] py-0 border border-[#cfcfcf]">Status</th>
                        <th class="w-[54px] font-normal pl-[2px] py-0 border border-[#cfcfcf]">Type</th>
                        <th class="font-normal pl-[2px] py-0 border border-r-0 border-[#cfcfcf]">Paramete</th>
                      </tr></thead>
                    </table>
                  </div>
                  <div class="flex h-[11px] bg-[#e0e0e0] pr-[11px]">
                    <button class="w-[10px] grid place-items-center bg-white border border-[#c8c8c8]" aria-label="Scroll left"><svg class="w-1 h-[6px]"><use href="#tri-left" /></svg></button>
                    <div class="w-[133px] bg-[#fcfcfc] border border-[#c8c8c8]"></div>
                    <div class="flex-1"></div>
                    <button class="w-[10px] grid place-items-center bg-white border border-[#c8c8c8]" aria-label="Scroll right"><svg class="w-1 h-[6px]"><use href="#tri-right" /></svg></button>
                  </div>
                </div>
                <div class="flex-1 ml-[3px] bg-[#fcfcfc]"><div class="h-[12px] pl-[2px] bg-[#f0f0f0] border border-[#cfcfcf]">Waiting Triggers</div></div>
              </div>
            </section>
          </div>
        </div>

        <!-- Properties -->
        <aside class="w-[167px] shrink-0 pl-[4px] flex flex-col">
          <div class="flex items-center h-[21px] pl-[2px] pr-1">
            <h2 class="flex-1 font-['Noto_Sans',sans-serif] text-[12px] leading-4">Properties</h2>
            <span class="flex items-center gap-[5px]"><svg class="w-[6px] h-1"><use href="#down" /></svg><svg class="w-2 h-2"><use href="#pin" /></svg><svg class="w-2 h-2"><use href="#close" /></svg></span>
          </div>
          <div class="flex items-center h-4 bg-[#f0f0f0] pl-1">
            <svg class="w-[11px] h-[11px]" viewBox="0 0 11 11"><path d="M0 0h11v11H0z" fill="#dcdcdc" /><path d="M1 1.500h3v3H1zM1 6.500h3v3H1z" fill="#fff" stroke="#2f4fa5" /><path d="M5.500 2h5M5.500 4h5M5.500 7h5M5.500 9h5" stroke="#2f4fa5" /></svg>
            <svg class="ml-[3px] w-[10px] h-[10px]" viewBox="0 0 10 10"><path d="M.5 4L2.300 .5L4 4M1 3h2.500M.5 6h3.500l-3.500 3.500H4" fill="none" stroke="#333" stroke-width=".9" /><path d="M7.500 1v8M5.500 7l2 2l2-2" fill="none" stroke="#2a8a4a" /></svg>
            <svg class="ml-[10px] w-[10px] h-[9px]" viewBox="0 0 10 9"><path d="M6 1l4 3.500L6 8.500L3 5z" fill="#d86bb5" stroke="#8a2f70" stroke-width=".6" /><path d="M0 5h3" stroke="#888" /></svg>
            <svg class="ml-[7px] w-2 h-[9px]" viewBox="0 0 8 9"><path d="M4.500 .5l3 3.500L4 8.500L.5 5z" fill="#3f8fd0" stroke="#1d4f86" stroke-width=".8" /></svg>
            <svg class="ml-[4px] w-[11px] h-[10px]" viewBox="0 0 11 10"><path d="M.5 2.500h8v7h-8z" fill="#fff" stroke="#444" /><path d="M.5 2h8v2h-8z" fill="#27408b" /><path d="M5 1h6v3H5z" fill="#e2c14c" stroke="#7a6512" stroke-width=".6" /><path d="M2 6h5M2 8h4" stroke="#888" stroke-width=".8" /></svg>
            <svg class="ml-1 w-[9px] h-[9px]" viewBox="0 0 9 9"><path d="M4.500 .3L8.500 4.500H6V8.700H3V4.500H.5z" fill="#7fd0a4" stroke="#5fae84" stroke-width=".5" /></svg>
            <svg class="ml-[11px] w-[11px] h-[8px]" viewBox="0 0 11 8"><circle cx="2.500" cy="5.500" r="1.800" fill="none" stroke="#333" /><circle cx="7" cy="5.500" r="1.800" fill="none" stroke="#333" /><path d="M2 3.500L4 1M7 3.500L9.500 1h1" fill="none" stroke="#333" stroke-width=".8" /></svg>
          </div>
          <table class="w-full h-[228px] table-fixed border-collapse bg-[#fcfcfc]">
            <colgroup><col class="w-[11px]" /><col class="w-[53px]" /><col /></colgroup>
            <tbody id="props"></tbody>
          </table>
          <div class="flex-1 bg-[#fcfcfc]"></div>
        </aside>
        <div class="w-[21px] shrink-0 flex justify-between"><span class="[writing-mode:vertical-rl] pt-1 pl-[2px]">Start</span><span class="w-[3px] h-4 mt-1 bg-[#d2d2d2]"></span></div>
      </main>

      <!-- Status bar -->
      <footer class="flex items-center justify-end h-[15px] bg-[#f0f0f0] border-t border-[#dcdcdc] pr-1 text-[#999]">
        <span class="w-[9px]">−</span>
        <input type="range" min="0" max="100" value="2" aria-label="Zoom" class="appearance-none w-[61px] h-px bg-[#bbb] [&::-webkit-slider-thumb]:appearance-none [&::-webkit-slider-thumb]:w-[3px] [&::-webkit-slider-thumb]:h-[9px] [&::-webkit-slider-thumb]:bg-[#999]" />
        <span class="w-[21px] pl-[6px]">+</span>
        <span class="w-[26px]">CAP</span><span class="w-[29px]">NUM</span><span class="w-[31px]">SCRL</span><span class="w-[34px]">CLOUD</span>
        <svg class="w-[6px] h-[6px] self-end mb-px" viewBox="0 0 6 6"><path d="M5 0v1M3 3v1M5 3v1M1 5v1M3 5v1M5 5v1" stroke="#bbb" /></svg>
      </footer>
    </div>

    <script>
      const byId = (id) => document.getElementById(id);

      // Project tree: [indent level, expander, icon, label]
      const indents = ["pl-[17px]", "pl-[30px]", "pl-[44px]"];
      const tree = [
        [0, "+", "model", "Schema Engineering"],
        [0, "+", "model", "Geospatial Modeling"],
        [0, "+", "model", "Systems Engineering"],
        [0, "+", "model", "Execution Analysis"],
        [0, "+", "model", "Analysis and Business Modeling"],
        [0, "+", "model", "Software Engineering"],
        [0, "+", "model", "Model Transformation"],
        [0, "-", "model", "Model Simulation"],
        [1, "", "sim", "Model Simulation"],
        [1, "+", "folder", "Activity Models"],
        [1, "+", "folder", "BPMN Models"],
        [1, "+", "folder", "BPSim Models"],
        [1, "+", "folder", "Interaction Models"],
        [1, "-", "open", "State Machine Models"],
        [2, "", "diagram", "State Machine Models"],
        [2, "+", "folder", "Customer Login"],
        [2, "+", "folder", "Nested Traces"],
        [2, "+", "folder", "Music Player"],
        [2, "+", "folder", "Operating States"],
        [2, "+", "folder", "Traffic Lights"],
      ];
      const expanders = {
        "+": '<path d="M1.500 .8v6.400L5 4z" fill="#fff" stroke="#555" stroke-width=".9" />',
        "-": '<path d="M5.500 1v6h-6z" fill="#222" />',
        "": "",
      };
      byId("tree").innerHTML = tree
        .map(
          ([level, exp, icon, label]) => `
          <li class="flex items-center h-3 ${indents[level]}">
            <svg class="w-[6px] h-2 mr-[6px]" viewBox="0 0 6 8">${expanders[exp]}</svg>
            <svg class="w-[11px] h-[10px]"><use href="#${icon}" /></svg>
            <span class="${icon === "diagram" ? "px-px bg-[#ececec]" : "px-px"}">${label}</span>
          </li>`
        )
        .join("");

      // Properties grid
      const props = [
        ["State Settings"],
        ["Name", "B1"],
        ["Scope", "Public"],
        ["Type", "State"],
        ["Stereotype", ""],
        ["Alias", ""],
        ["Complexity", "Easy"],
        ["Version", "1.0"],
        ["Phase", "1.0"],
        ["Language", "C++"],
        ["Filename", ""],
        ["Project"],
        ["Package", "Nested Traces", true],
        ["Author", "Paulene Dean"],
        ["Status", "Proposed"],
        ["Created", "31/10/2011 5:16:57 PM", true],
        ["Modified", "31/10/2011 5:18:21 PM", true],
        ["Keywords", ""],
        ["GUID", "{DAFE659C-69ED-498a-92..."],
        ["Advanced"],
      ];
      byId("props").innerHTML = props
        .map(([name, value, dim]) => {
          if (value === undefined) {
            const mark = name === "Advanced"
              ? '<path d="M1 .5v5l3-2.500z" fill="none" stroke="#999" stroke-width=".7" />'
              : '<path d="M5 1v4H1z" fill="#888" />';
            const focus = name === "Project" ? "outline outline-[#ccc]" : "";
            return `<tr class="bg-[#f0f0f0]"><td class="p-0 pl-[3px]"><svg class="w-[6px] h-[6px]" viewBox="0 0 6 6">${mark}</svg></td>
              <th colspan="2" class="p-0 pl-[3px] text-left font-normal"><span class="${focus}">${name}</span></th></tr>`;
          }
          // the GUID only fits its column in the narrower face
          const face = name === "GUID" ? "font-['Noto_Sans',sans-serif]" : "";
          return `<tr class="${dim ? "text-[#aaa]" : "text-[#333]"}"><td class="p-0 bg-[#f0f0f0]"></td>
            <th class="p-0 pl-[2px] text-left font-normal border border-[#ececec]">${name}</th>
            <td class="p-0 pl-[2px] border border-[#ececec] whitespace-nowrap ${face}">${value}</td></tr>`;
        })
        .join("");

      // Simulation log
      const log = [
        ["09362211", "Initial"],
        ["09362762", "Setup"],
        ["09363298", "VehiclesGreen"],
        ["09363842", "VehiclesYellow"],
        ["09364373", "PedestriansWalk"],
        ["09364908", "PedestriansFlash"],
        ["09365448", "VehiclesGreen"],
        ["09366026", "VehiclesYellow"],
        ["09366605", "PedestriansWalk"],
      ];
      byId("log").innerHTML = log
        .map(([time, state]) => `<li class="flex pl-1"><span class="w-[50px]">[${time}]</span>Pedestrian Crossing.${state}</li>`)
        .join("");

      // Ribbon helpers
      byId("helpers").innerHTML = ["Sweeper", "Show Direction", "HV Lock", "Perpendicular Lines", "Presentation", "Reorder Messages"]
        .map((name) => `<label class="flex items-center gap-[3px] whitespace-nowrap"><input type="checkbox" class="appearance-none w-2 h-2 bg-white border border-[#ccc]" />${name}</label>`)
        .join("");

      // Alignment icons, drawn on an 11x11 grid
      const alignTop = [
        "M1 1h4M1 10h4M3 2v7M2 3l1-1l1 1M2 8l1 1l1-1M7 1h3v9H7z",
        "M1 1v4M10 1v4M2 3h7M3 2L2 3l1 1M8 2l1 1l-1 1M1 7h9v3H1z",
        "M1 1h5v6H1zM8 1v9M10 1v9M1 9h6M7 1h4",
        "M5.500 0v11M3.500 1.500h4v3h-4zM1.500 6.500h8v3h-8z",
        "M0 5.500h11M1.500 1.500h3v8h-3zM6.500 3.500h3v4h-3z",
      ];
      const alignBottom = [
        "M.5 0v11M2 1h3v3H2zM2 7h3v3H2zM7 3h4M8 2L7 3l1 1M7 8h4",
        "M10.500 0v11M6 1h3v3H6zM6 7h3v3H6zM0 3h4M3 2l1 1l-1 1M0 8h4",
        "M0 .5h11M1 2h3v3H1zM7 2h3v3H7zM2.500 6v4M8.500 6v4M1.500 7l1-1l1 1M7.500 7l1-1l1 1",
        "M0 10.500h11M1 6h3v3H1zM7 6h3v3H7zM2.500 1v4M8.500 1v4M1.500 4l1 1l1-1M7.500 4l1 1l1-1",
        "M1 0v11M10 0v11M2 5.500h7M3.500 4L2 5.500L3.500 7M7.500 4L9 5.500L7.500 7",
        "M1 1h9M1 10h9M5.500 2v7M4 3.500L5.500 2L7 3.500M4 7.500L5.500 9L7 7.500",
      ];
      const alignIcon = (d) => `<svg class="w-[11px] h-[11px]" viewBox="0 0 11 11"><path d="${d}" fill="none" stroke="#8d8f9e" stroke-width=".8" /></svg>`;
      byId("align-top").innerHTML =
        alignTop.map(alignIcon).join("") +
        `<svg class="w-[11px] h-[11px]" viewBox="0 0 11 11" stroke="#8d8f9e" stroke-width=".8"><path d="M1 1h4v4H1zM6 6h4v4H6z" fill="#bccbe4" /><path d="M2.500 2.500h6v5.500h-6z" fill="#f6e3b8" /></svg>
        <svg class="w-[11px] h-[11px]" viewBox="0 0 11 11" stroke="#8d8f9e" stroke-width=".8"><path d="M3 3h5v5H3z" fill="#f6e3b8" /><path d="M1 1h4v4H1zM6 6h4v4H6z" fill="#bccbe4" /></svg>`;
      byId("align-bottom").innerHTML =
        alignBottom.map(alignIcon).join("") +
        '<svg class="w-[11px] h-[11px]" viewBox="0 0 11 11"><path d="M1 1h9v9H1zM5.500 1v9M1 5.500h9" fill="#fff" stroke="#556" /></svg><svg class="w-1 h-[3px] -ml-[3px]"><use href="#down" /></svg>';

      // Diagram drawing
      const defs = (id) => `<defs>
        <linearGradient id="${id}-fill"><stop offset="0" stop-color="#feedd2" /><stop offset="1" stop-color="#fcdba3" /></linearGradient>
        <marker id="${id}-arrow" viewBox="0 0 10 8" refX="9" refY="4" markerWidth="10" markerHeight="8" orient="auto"><path d="M1 1L9 4L1 7" fill="none" stroke="#444" /></marker>
        <pattern id="${id}-hatch" width="3" height="3" patternUnits="userSpaceOnUse"><path d="M-1 1L1 -1M0 3L3 0M2 4L4 2" stroke="#444" stroke-width=".9" /></pattern>
      </defs>`;
      const esc = (s) => s.replace(/&/g, "&amp;").replace(/</g, "&lt;");
      const label = (x, y, lines, pitch) =>
        lines.map((s, i) => `<text x="${x}" y="${y + Math.round(i * pitch)}" fill="#222">${esc(s)}</text>`).join("");
      const edge = (id, d) => `<path d="${d}" fill="none" stroke="#555" marker-end="url(#${id}-arrow)" />`;

      // Lines that start with a blank are the indented, greyed body of a behaviour
      function state(id, pitch, { x, y, w, h, r, name, head, lines = [], hot }) {
        const bar = head ? `<path d="M${x} ${y + head}h${w}" stroke="#444" />` : "";
        const body = lines
          .map((s, i) => {
            const ty = y + head + 8 + Math.round(i * pitch);
            const mark = i === hot ? `<rect x="${x + 1}" y="${ty - 7}" width="${w - 2}" height="9" fill="#fff" />` : "";
            return mark + `<text x="${x + (s[0] === " " ? 7 : 3)}" y="${ty}" fill="${s[0] === " " ? "#888" : "#333"}">${esc(s.trim())}</text>`;
          })
          .join("");
        return `<rect x="${x + 2}" y="${y + 2}" width="${w}" height="${h}" rx="${r}" fill="#dcdcdc" />
          <rect x="${x}" y="${y}" width="${w}" height="${h}" rx="${r}" fill="url(#${id}-fill)" stroke="#444" />
          ${bar}<text x="${x + w / 2}" y="${y + 8}" text-anchor="middle" class="font-bold" fill="#111">${name}</text>${body}`;
      }

      const crossing = [
        { x: 250.5, y: 491.5, w: 110, h: 70, r: 12, name: "Setup", head: 11, lines: ["entry / Setup", " sim.looped = 1;", " this.pedestrianwaiting =", " false;", " this.countEarly = 0;", " this.countLate = 0;", " maxLoops = 5;"] },
        { x: 250.5, y: 579.5, w: 110, h: 52, r: 12, name: "VehiclesGreen", head: 12, lines: ["entry / CheckPedestrian", " this.pedestrianwaiting =", " (Math.floor(Math.random()*2) ==", " 1);"] },
        { x: 517.5, y: 505.5, w: 110, h: 32, r: 16, name: "Teardown" },
        { x: 517.5, y: 581.5, w: 110, h: 47, r: 12, name: "PedestriansFlash" },
        { x: 399.5, y: 673.5, w: 110, h: 32, r: 16, name: "VehiclesGreenWaiting" },
        { x: 250.5, y: 728.5, w: 110, h: 40, r: 12, name: "VehiclesYellow" },
        { x: 517.5, y: 730.5, w: 110, h: 40, r: 12, name: "PedestriansWalk", head: 11, lines: ["exit / ClearPedestrian", " this.pedestrianwaiting =", " false;"] },
      ];
      const crossingEdges = ["M305.500 465V490", "M307.500 561V579", "M573.500 505V465", "M574.500 581V538", "M517 604.500H361", "M305.500 632V728", "M352 631L427 673", "M414 706L357 729", "M361 750.500H517", "M574.500 730V629"];
      // Both canvases are scrolled, the shapes keep their diagram coordinates
      byId("pedestrian").innerHTML = `${defs("ped")}<g transform="translate(-229 -409)" class="text-[5px]">
        <text x="236" y="426" class="font-['Noto_Sans',sans-serif] text-[18px]" fill="#111">State Machine Simulation</text>
        ${crossing.map((s) => state("ped", 7.75, s)).join("")}
        ${crossingEdges.map((d) => edge("ped", d)).join("")}
        <path d="M361 526.500H390" stroke="#555" stroke-dasharray="2 1" />
        <path d="M390.500 465.500h105l6 6.500v116h-111zM495.500 465.500v6.500h6" fill="#fff" stroke="#444" />
        <circle cx="305.500" cy="459" r="6" fill="#000" />
        <circle cx="573" cy="458.500" r="5.500" fill="#c8e39a" stroke="#333" /><circle cx="573" cy="458.500" r="2.800" fill="#000" />
        ${label(393, 479, ["This node sets up the initial parameters", "of the simulation. Variables with a prefix", 'of "this." or "sim." are shown in the', "locals window and represent member", "variables of the owning class and", "globals specific to the simulation", "respectively.", "", "Other variables may also be set but are", "not shown as local variables."], 7.65)}
        ${label(310, 474, ["Initial"], 8)}
        ${label(586, 475, ["Final"], 8)}
        ${label(530, 560, ["[sim.looped >=", "maxLoops;]"], 8)}
        ${label(411, 613, ["[sim.looped <", "maxLoops;]", "/sim.looped ++;"], 8)}
        ${label(421, 650, ["[this.pedestrianwaiting == false;]", "/this.countLate ++;"], 8)}
        ${label(230, 674, ["[this.pedestrianwaiting", "== true;]", "/this.countEarly ++;"], 8)}
      </g>`;

      const trace = (n, end = ";") => ["entry / entry", ` Trace("${n} entry - " +`, ` IS_IN("${n}"));`, "exit / exit", ` Trace("${n} exit - " +`, ` IS_IN("${n}"))${end}`];
      const nested = [
        { x: 820.5, y: 494.5, w: 139, h: 71, r: 12, name: "A", head: 14, lines: trace("A") },
        { x: 690.5, y: 603.5, w: 343, h: 152, r: 12, name: "B", head: 14, lines: trace("B") },
        { x: 690.5, y: 804.5, w: 343, h: 152, r: 12, name: "C", head: 14, lines: ["entry / entry"] },
        { x: 764.5, y: 667.5, w: 120, h: 80, r: 12, name: "B1", head: 14, lines: trace("B1"), hot: 3 },
        { x: 902.5, y: 667.5, w: 116, h: 80, r: 12, name: "B2", head: 14, lines: trace("B2", "") },
      ];
      const nestedEdges = ["M787 527.500H820", "M854.500 566V603", "M940.500 566V667", "M740 706.500H761", "M889 708.500H902", "M850.500 756V804", "M954.500 748V860"];
      const handles = [[762, 665], [824, 665], [887, 665], [762, 707], [887, 707], [762, 750], [824, 750], [887, 750]];
      byId("nested").innerHTML = `${defs("nest")}<g transform="translate(-659 -413)" class="font-['Noto_Sans',sans-serif] text-[6px]">
        <text x="668" y="444" class="text-[21px]" fill="#111">Nested Traces</text>
        ${nested.map((s) => state("nest", 8.75, s)).join("")}
        ${nestedEdges.map((d) => edge("nest", d)).join("")}
        <path d="M761 664h128v88h-128zM765 668v80h120v-80z" fill="#fff" fill-rule="evenodd" />
        <path d="M761 664h128v88h-128zM765 668v80h120v-80z" fill="url(#nest-hatch)" fill-rule="evenodd" />
        ${handles.map(([x, y]) => `<rect x="${x - 1.5}" y="${y - 1.5}" width="4" height="4" fill="#fff" stroke="#111" />`).join("")}
        <path d="M898 673v-7M896.500 668l1.500-3l1.500 3z" fill="#111" stroke="#111" />
        <path d="M895 680.500l2-2.500h3l2 2.500l-2 2.500h-3z" fill="#fff" stroke="#333" stroke-width=".8" />
        <circle cx="898" cy="690.500" r="3" fill="#fff" stroke="#333" /><path d="M900 692.500l3 3" stroke="#333" />
        <circle cx="780.500" cy="526.500" r="6.500" fill="#000" />
        <circle cx="734" cy="705.500" r="6.500" fill="#000" />
        <rect x="840" y="770" width="20" height="10" fill="#fff" />
        <rect x="944" y="766" width="140" height="18" fill="#fff" />
        ${label(772, 540, ["Initial"], 9)}
        ${label(725, 718, ["Initial"], 9)}
        ${label(827, 583, ["Outer"], 9)}
        ${label(841, 777, ["Outer"], 9)}
        ${label(950, 575, ["Inner", '/Trace("A->B2 effect - " + IS_IN("A") + ","  + IS_IN("B2"));'], 8)}
        ${label(945, 773, ["Inner", '/Trace("B2->C2 effect - " + IS_IN("B2") + ","  + IS_IN("C2"));'], 9)}
      </g>`;
    </script>
  </body>
</html>
